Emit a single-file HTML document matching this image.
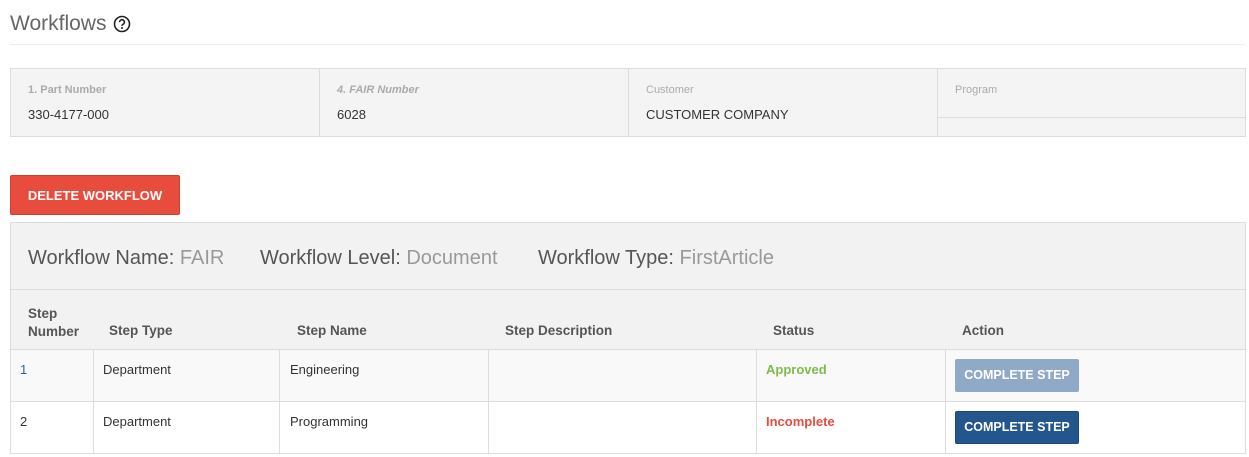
<!DOCTYPE html>
<html><head><style>
*{margin:0;padding:0;box-sizing:border-box}
body{width:1249px;height:457px;background:#fff;font-family:"Liberation Sans",sans-serif;position:relative;overflow:hidden;color:#333}
.a{position:absolute;white-space:nowrap}
.lbl{font-size:11px;color:#aaa}
.val{font-size:13px;color:#333}
.btn{position:absolute;color:#fff;font-weight:bold;text-align:center;border-radius:2px}
.th{font-size:13.5px;font-weight:bold;color:#555}
.td{font-size:13px;color:#333}
</style></head><body>
<div class="a" style="left:10px;top:12px;font-size:21px;color:#666">Workflows</div>
<svg class="a" style="left:113px;top:15px" width="18" height="18" viewBox="0 0 18 18"><circle cx="9" cy="9" r="7.5" fill="none" stroke="#222" stroke-width="1.6"/><path d="M6.6 7.2a2.4 2.4 0 1 1 3.4 2.1c-.7.4-1 .8-1 1.6" fill="none" stroke="#222" stroke-width="1.6"/><circle cx="9" cy="13" r="1" fill="#222"/></svg>
<div class="a" style="left:10px;top:44px;width:1235px;height:1px;background:#eee"></div>

<div class="a" style="left:10px;top:68px;width:1236px;height:69px;background:#f4f4f4;border:1px solid #ddd"></div>
<div class="a" style="left:319px;top:69px;width:1px;height:67px;background:#ddd"></div>
<div class="a" style="left:628px;top:69px;width:1px;height:67px;background:#ddd"></div>
<div class="a" style="left:937px;top:69px;width:1px;height:67px;background:#ddd"></div>
<div class="a" style="left:938px;top:117px;width:307px;height:1px;background:#ddd"></div>
<div class="a lbl" style="left:28px;top:84px;font-weight:bold">1. Part Number</div>
<div class="a val" style="left:28px;top:107px">330-4177-000</div>
<div class="a lbl" style="left:337px;top:84px;font-weight:bold;font-style:italic">4. FAIR Number</div>
<div class="a val" style="left:337px;top:107px">6028</div>
<div class="a lbl" style="left:646px;top:84px">Customer</div>
<div class="a val" style="left:646px;top:107px">CUSTOMER COMPANY</div>
<div class="a lbl" style="left:955px;top:84px">Program</div>

<div class="btn" style="left:10px;top:175px;width:170px;height:40px;background:#e74c3c;font-size:13px;line-height:40px;border:1px solid #d0402f">DELETE WORKFLOW</div>

<div class="a" style="left:10px;top:222px;width:1236px;height:232px;border:1px solid #ddd;background:#fff"></div>
<div class="a" style="left:11px;top:223px;width:1234px;height:126px;background:#f2f2f2"></div>
<div class="a" style="left:11px;top:289px;width:1234px;height:1px;background:#ddd"></div>
<div class="a" style="left:28px;top:247px;font-size:20px;color:#555">Workflow Name: <span style="color:#999">FAIR</span></div>
<div class="a" style="left:260px;top:247px;font-size:20px;color:#555">Workflow Level: <span style="color:#999">Document</span></div>
<div class="a" style="left:538px;top:247px;font-size:20px;color:#555">Workflow Type: <span style="color:#999">FirstArticle</span></div>

<div class="a th" style="left:28px;top:305px;line-height:18px">Step<br>Number</div>
<div class="a th" style="left:109px;top:323px">Step Type</div>
<div class="a th" style="left:297px;top:323px">Step Name</div>
<div class="a th" style="left:505px;top:323px">Step Description</div>
<div class="a th" style="left:773px;top:323px">Status</div>
<div class="a th" style="left:962px;top:323px">Action</div>

<div class="a" style="left:11px;top:349px;width:1234px;height:52px;background:#f9f9f9;border-top:1px solid #ddd"></div>
<div class="a" style="left:11px;top:401px;width:1234px;height:1px;background:#ddd"></div>
<div class="a" style="left:93px;top:349px;width:1px;height:104px;background:#ddd"></div>
<div class="a" style="left:279px;top:349px;width:1px;height:104px;background:#ddd"></div>
<div class="a" style="left:488px;top:349px;width:1px;height:104px;background:#ddd"></div>
<div class="a" style="left:756px;top:349px;width:1px;height:104px;background:#ddd"></div>
<div class="a" style="left:945px;top:349px;width:1px;height:104px;background:#ddd"></div>

<div class="a td" style="left:20px;top:362px;color:#2a6496">1</div>
<div class="a td" style="left:103px;top:362px">Department</div>
<div class="a td" style="left:290px;top:362px">Engineering</div>
<div class="a td" style="left:766px;top:362px;color:#7dbb4a;font-weight:bold">Approved</div>
<div class="btn" style="left:955px;top:359px;width:124px;height:33px;line-height:33px;font-size:12.5px;background:#8fa9c6">COMPLETE STEP</div>

<div class="a td" style="left:20px;top:414px">2</div>
<div class="a td" style="left:103px;top:414px">Department</div>
<div class="a td" style="left:290px;top:414px">Programming</div>
<div class="a td" style="left:766px;top:414px;color:#e74c3c;font-weight:bold">Incomplete</div>
<div class="btn" style="left:955px;top:411px;width:124px;height:33px;line-height:31px;font-size:12.5px;background:#24568e;border:1px solid #1c4778">COMPLETE STEP</div>
</body></html>
